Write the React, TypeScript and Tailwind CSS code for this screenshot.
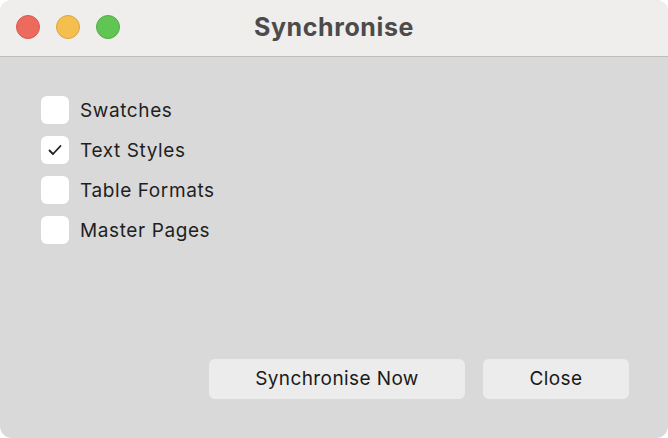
const OPTIONS = [
  { label: "Swatches", checked: false },
  { label: "Text Styles", checked: true },
  { label: "Table Formats", checked: false },
  { label: "Master Pages", checked: false }
];

function Checkbox({ checked }: { checked: boolean }) {
  return (
    <div className="w-[28px] h-[28px] rounded-[6px] bg-white flex items-center justify-center">
      {checked && (
        <svg width="14" height="12" viewBox="0 0 14 12" fill="none">
          <path
            d="M1.5 6.5 L5 10 L12.5 2"
            stroke="#1e1e1e"
            strokeWidth="1.8"
            strokeLinecap="round"
            strokeLinejoin="round"
          />
        </svg>
      )}
    </div>
  );
}

export default function App() {
  return (
    <div
      className="w-[668px] h-[438px] bg-white"
      style={{ fontFamily: "Inter, 'Noto Sans', sans-serif" }}
    >
      <div className="w-full h-full rounded-[12px] overflow-hidden flex flex-col bg-[#d9d9d9]">
        <div className="relative h-[57px] shrink-0 bg-[#efeeed] border-b border-[#bdbdbd] flex items-center justify-center">
          <div className="absolute left-[16px] top-[15px] flex gap-[16px]">
            <span className="w-[24px] h-[24px] rounded-full bg-[#ed6a5e] border border-[#d55a4f]" />
            <span className="w-[24px] h-[24px] rounded-full bg-[#f5bf4f] border border-[#d9a640]" />
            <span className="w-[24px] h-[24px] rounded-full bg-[#61c554] border border-[#4fae43]" />
          </div>
          <span className="text-[25px] font-bold text-[#4b4b4b] tracking-[0.6px] -mt-[1px]">
            Synchronise
          </span>
        </div>

        <div className="flex-1 flex flex-col pl-[41px] pr-[39px] pt-[39px] pb-[39px]">
          <div className="flex flex-col gap-[12px]">
            {OPTIONS.map((opt) => (
              <div key={opt.label} className="flex items-center gap-[11px]">
                <Checkbox checked={opt.checked} />
                <span className="text-[19px] text-[#1f1f1f] leading-none tracking-[0.6px]">
                  {opt.label}
                </span>
              </div>
            ))}
          </div>

          <div className="mt-auto flex justify-end gap-[18px]">
            <button
              type="button"
              className="w-[256px] h-[40px] rounded-[6px] bg-[#ececec] text-[19px] text-[#1a1a1a] tracking-[0.4px]"
            >
              Synchronise Now
            </button>
            <button
              type="button"
              className="w-[146px] h-[40px] rounded-[6px] bg-[#ececec] text-[19px] text-[#1a1a1a] tracking-[0.4px]"
            >
              Close
            </button>
          </div>
        </div>
      </div>
    </div>
  );
}
